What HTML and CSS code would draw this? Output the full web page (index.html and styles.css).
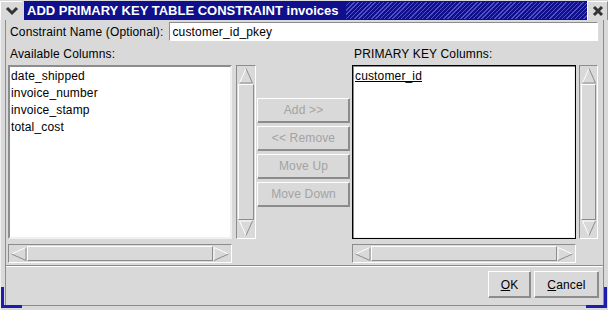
FILE: index.html
```html
<!DOCTYPE html>
<html lang="en">
<head>
    <meta charset="UTF-8">
    <title>ADD PRIMARY KEY TABLE CONSTRAINT invoices</title>
    <link rel="stylesheet" href="styles.css">
</head>
<body>
    <div class="window">
        <div class="titlebar">
            <div class="tb-btn">
                <svg width="14" height="10" viewBox="0 0 14 10"><path d="M2 2 L7 7 L12 2" fill="none" stroke="#333" stroke-width="3"/></svg>
            </div>
            <div class="title">
                <span class="title-text">ADD PRIMARY KEY TABLE CONSTRAINT invoices</span>
                <div class="hatch"></div>
            </div>
            <div class="tb-btn close">
                <svg width="12" height="12" viewBox="0 0 12 12"><path d="M2 2 L10 10 M10 2 L2 10" stroke="#333" stroke-width="3"/></svg>
            </div>
        </div>

        <div class="frame">
            <div class="content">
                <div class="name-row">
                    <label for="cname">Constraint Name (Optional):</label>
                    <input type="text" id="cname" value="customer_id_pkey">
                </div>

                <div class="columns">
                    <div class="col">
                        <div class="col-label">Available Columns:</div>
                        <div class="list-wrap">
                            <div class="list">
                                <div class="item">date_shipped</div>
                                <div class="item">invoice_number</div>
                                <div class="item">invoice_stamp</div>
                                <div class="item">total_cost</div>
                            </div>
                            <div class="vscroll">
                                <svg class="arrow" width="16" height="17" viewBox="0 0 16 17"><path d="M1.5 16 L8 1.5" stroke="#fff"/><path d="M8 1.5 L14.5 16 L1.5 16" fill="none" stroke="#8c8c8c"/></svg>
                                <div class="thumb"></div>
                                <svg class="arrow" width="16" height="17" viewBox="0 0 16 17"><path d="M1.5 1 L14.5 1 M1.5 1 L8 15.5" fill="none" stroke="#fff"/><path d="M8 15.5 L14.5 1" stroke="#8c8c8c"/></svg>
                            </div>
                        </div>
                        <div class="hscroll">
                            <svg class="arrow" width="17" height="16" viewBox="0 0 17 16"><path d="M16 1.5 L1.5 8" stroke="#fff"/><path d="M1.5 8 L16 14.5 L16 1.5" fill="none" stroke="#8c8c8c"/></svg>
                            <div class="thumb"></div>
                            <svg class="arrow" width="17" height="16" viewBox="0 0 17 16"><path d="M1 1.5 L1 14.5 M1 1.5 L15.5 8" fill="none" stroke="#fff"/><path d="M15.5 8 L1 14.5" stroke="#8c8c8c"/></svg>
                        </div>
                    </div>

                    <div class="actions">
                        <button class="btn" disabled>Add &gt;&gt;</button>
                        <button class="btn" disabled>&lt;&lt; Remove</button>
                        <button class="btn" disabled>Move Up</button>
                        <button class="btn" disabled>Move Down</button>
                    </div>

                    <div class="col right">
                        <div class="col-label">PRIMARY KEY Columns:</div>
                        <div class="list-wrap">
                            <div class="list focused">
                                <div class="item active">customer_id</div>
                            </div>
                            <div class="vscroll">
                                <svg class="arrow" width="16" height="17" viewBox="0 0 16 17"><path d="M1.5 16 L8 1.5" stroke="#fff"/><path d="M8 1.5 L14.5 16 L1.5 16" fill="none" stroke="#8c8c8c"/></svg>
                                <div class="thumb"></div>
                                <svg class="arrow" width="16" height="17" viewBox="0 0 16 17"><path d="M1.5 1 L14.5 1 M1.5 1 L8 15.5" fill="none" stroke="#fff"/><path d="M8 15.5 L14.5 1" stroke="#8c8c8c"/></svg>
                            </div>
                        </div>
                        <div class="hscroll">
                            <svg class="arrow" width="17" height="16" viewBox="0 0 17 16"><path d="M16 1.5 L1.5 8" stroke="#fff"/><path d="M1.5 8 L16 14.5 L16 1.5" fill="none" stroke="#8c8c8c"/></svg>
                            <div class="thumb"></div>
                            <svg class="arrow" width="17" height="16" viewBox="0 0 17 16"><path d="M1 1.5 L1 14.5 M1 1.5 L15.5 8" fill="none" stroke="#fff"/><path d="M15.5 8 L1 14.5" stroke="#8c8c8c"/></svg>
                        </div>
                    </div>
                </div>

                <div class="footer">
                    <button class="btn ok"><u>O</u>K</button>
                    <button class="btn cancel"><u>C</u>ancel</button>
                </div>
            </div>
        </div>

        <div class="corner left"></div>
        <div class="corner right"></div>
    </div>
</body>
</html>
```

FILE: styles.css
```css
body {
    margin: 0;
    font-family: "Liberation Sans", Arial, sans-serif;
    font-size: 12px;
    letter-spacing: 0.15px;
    color: #000;
    background-color: #d9d9d9;
}

.window {
    position: relative;
    width: 608px;
    height: 310px;
    background-color: #d9d9d9;
    overflow: hidden;
}

/* title bar */
.titlebar {
    display: flex;
    height: 20px;
    padding-top: 1px;
    box-sizing: border-box;
}

.tb-btn {
    width: 22px;
    display: flex;
    align-items: center;
    justify-content: center;
    background-color: #d9d9d9;
    border-top: 1px solid #fff;
    border-left: 1px solid #fff;
    box-sizing: border-box;
}

.tb-btn.close {
    width: 21px;
    border-right: 1px solid #8c8c8c;
}

.title {
    flex: 1;
    display: flex;
    align-items: center;
    background-color: #10108c;
    margin-left: 2px;
}

.title-text {
    color: #fff;
    font-weight: bold;
    font-size: 13px;
    letter-spacing: 0;
    padding-left: 3px;
    white-space: nowrap;
}

.hatch {
    flex: 1;
    height: 17px;
    margin-left: 7px;
    background: repeating-linear-gradient(-45deg, #10108c 0, #10108c 2px, #5050c8 2px, #5050c8 3px);
}

/* frame */
.frame {
    height: 290px;
    padding: 0 2px 4px 2px;
    border-left: 1px solid #f0f0f0;
    box-sizing: border-box;
}

.content {
    height: 100%;
    box-sizing: border-box;
    border-left: 1px solid #8c8c8c;
    border-right: 1px solid #8c8c8c;
    border-bottom: 1px solid #8c8c8c;
    padding: 2px 5px 0 2px;
    margin-left: 2px;
    margin-right: 2px;
}

.name-row {
    display: flex;
    align-items: center;
    gap: 6px;
    padding-left: 2px;
}

.name-row label {
    white-space: nowrap;
}

.name-row input {
    flex: 1;
    height: 19px;
    box-sizing: border-box;
    font-family: inherit;
    font-size: 12px;
    letter-spacing: 0.15px;
    padding: 0 2px;
    border: 1px solid;
    border-color: #8c8c8c #fff #fff #8c8c8c;
    outline: none;
    background: #fff;
}

.columns {
    display: flex;
    margin-top: 6px;
}

.col {
    width: 248px;
}

.col-label {
    height: 18px;
    padding-left: 2px;
    line-height: 14px;
}

.list-wrap {
    display: flex;
    gap: 4px;
    height: 174px;
}

.list {
    width: 224px;
    box-sizing: border-box;
    background: #fff;
    border: 2px solid;
    border-color: #8c8c8c #f0f0f0 #f0f0f0 #8c8c8c;
    padding: 1px 1px;
}

.list.focused {
    border: 1px solid #000;
    box-shadow: inset 1px 1px 0 #8c8c8c, inset -1px -1px 0 #f0f0f0;
    padding: 2px 2px;
}

.item {
    line-height: 17px;
}

.item.active {
    text-decoration: underline;
}

.vscroll, .hscroll {
    display: flex;
    box-sizing: border-box;
    border: 1px solid;
    border-color: #8c8c8c #fff #fff #8c8c8c;
    padding: 1px;
}

.vscroll {
    width: 20px;
    flex-direction: column;
}

.hscroll {
    width: 224px;
    height: 19px;
    margin-top: 5px;
}

.vscroll .thumb, .hscroll .thumb {
    flex: 1;
    border: 1px solid;
    border-color: #fff #8c8c8c #8c8c8c #fff;
}

.arrow {
    display: block;
    flex-shrink: 0;
}

.right .list-wrap {
    gap: 3px;
}

.right .vscroll {
    width: 19px;
}

.actions {
    width: 94px;
    height: 174px;
    margin-top: 18px;
    display: flex;
    flex-direction: column;
    justify-content: center;
    gap: 3px;
    margin-left: 1px;
    margin-right: 2px;
}

.btn {
    height: 25px;
    font-family: inherit;
    font-size: 12px;
    letter-spacing: 0.15px;
    background: #d9d9d9;
    border: 1px solid;
    border-color: #fff #8c8c8c #8c8c8c #fff;
    box-shadow: inset -1px -1px 0 #8c8c8c;
    color: #000;
    padding: 0;
}

.btn:disabled {
    color: #a3a3a3;
}

.footer {
    display: flex;
    justify-content: flex-end;
    gap: 3px;
    margin-top: 2px;
    padding-top: 5px;
    border-top: 1px solid #8c8c8c;
    box-shadow: inset 0 1px 0 #fff;
    margin-left: -2px;
    margin-right: -5px;
    padding-right: 4px;
}

.btn.ok {
    width: 43px;
    height: 27px;
}

.btn.cancel {
    width: 65px;
    height: 27px;
}

/* blue resize corners */
.corner {
    position: absolute;
    bottom: 2px;
    width: 21px;
    height: 21px;
    border-bottom: 3px solid #1c1cae;
    box-sizing: border-box;
}

.corner.left {
    left: 1px;
    border-left: 3px solid #1c1cae;
}

.corner.right {
    right: 1px;
    border-right: 3px solid #1c1cae;
}
```
